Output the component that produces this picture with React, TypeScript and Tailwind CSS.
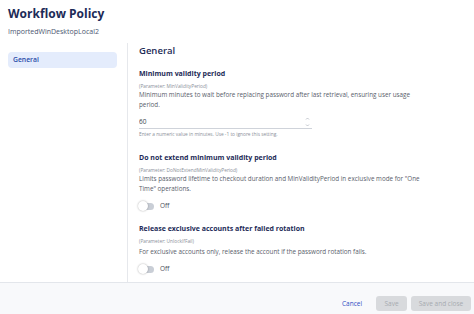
import React, { useState } from 'react';

const font = { fontFamily: '"Open Sans", "Noto Sans", sans-serif' };

function Toggle({ on, onChange }: { on: boolean; onChange: () => void }) {
  return (
    <button onClick={onChange} className="flex items-center gap-[6px] h-[10px]">
      <span className="relative w-[15px] h-[7px] rounded-full bg-[#c9ced6]">
        <span className="absolute -top-[2px] -left-[1px] w-[10px] h-[10px] rounded-full bg-white shadow-[0_0_2px_rgba(0,0,0,0.35)]" />
      </span>
      <span className="text-[6.5px] text-[#4a4f5a]">{on ? 'On' : 'Off'}</span>
    </button>
  );
}

export default function App() {
  const [minValidity, setMinValidity] = useState('60');
  const [noExtend, setNoExtend] = useState(false);
  const [unlock, setUnlock] = useState(false);

  return (
    <div style={font} className="w-[474px] h-[314px] bg-white flex flex-col overflow-hidden">
      <div className="px-[8px] pt-[4px]">
        <h1 className="text-[12px] font-bold text-[#1d2b57] leading-[20px]">Workflow Policy</h1>
        <p className="text-[7px] text-[#4a5670] leading-[10px] mt-[3px]">ImportedWinDesktopLocal2</p>
      </div>

      <div className="flex flex-1 min-h-0 mt-[6px]">
        <div className="w-[127px] pl-[8px] pr-[10px] pt-[9px]">
          <div className="h-[16px] rounded-[4px] bg-[#e4ecfc] flex items-center px-[5px] text-[6.8px] font-semibold text-[#2a4aa8]">
            General
          </div>
        </div>
        <div className="w-px bg-[#e6e8ec]" />
        <div className="flex-1 pl-[11px] pr-[10px] pt-[1px]">
          <h2 className="text-[9.5px] font-semibold text-[#1d2b57] leading-[14px]">General</h2>

          <div className="mt-[11px]">
            <h3 className="text-[7px] font-bold text-[#1d2b57] leading-[10px]">Minimum validity period</h3>
            <p className="text-[4.8px] text-[#8a8f99] leading-[8px] mt-[3px]">(Parameter: MinValidityPeriod)</p>
            <p className="text-[6.3px] text-[#5a606b] leading-[10px] w-[282px]">
              Minimum minutes to wait before replacing password after last retrieval, ensuring user usage period.
            </p>
            <div className="mt-[5px] w-[173px] h-[14px] border-b border-[#cfd3da] flex items-center justify-between">
              <input
                value={minValidity}
                onChange={(e) => setMinValidity(e.target.value)}
                className="w-[150px] text-[6.5px] text-[#3a3f4a] outline-none bg-transparent"
              />
              <svg width="5" height="12" viewBox="0 0 5 12" className="mr-[2px]" fill="none" stroke="#b3b8c0" strokeWidth="0.8">
                <path d="M1 3.5 L2.5 2 L4 3.5" />
                <path d="M1 8.5 L2.5 10 L4 8.5" />
              </svg>
            </div>
            <p className="text-[4.8px] text-[#8a8f99] leading-[8px] mt-[1px]">
              Enter a numeric value in minutes. Use -1 to ignore this setting.
            </p>
          </div>

          <div className="mt-[15px]">
            <h3 className="text-[7px] font-bold text-[#1d2b57] leading-[10px]">Do not extend minimum validity period</h3>
            <p className="text-[4.8px] text-[#8a8f99] leading-[8px] mt-[3px]">(Parameter: DoNotExtendMinValidityPeriod)</p>
            <p className="text-[6.3px] text-[#5a606b] leading-[10px] w-[282px]">
              Limits password lifetime to checkout duration and MinValidityPeriod in exclusive mode for "One Time" operations.
            </p>
            <div className="mt-[7px]">
              <Toggle on={noExtend} onChange={() => setNoExtend(!noExtend)} />
            </div>
          </div>

          <div className="mt-[13px]">
            <h3 className="text-[7px] font-bold text-[#1d2b57] leading-[10px]">Release exclusive accounts after failed rotation</h3>
            <p className="text-[4.8px] text-[#8a8f99] leading-[8px] mt-[3px]">(Parameter: UnlockIfFail)</p>
            <p className="text-[6.3px] text-[#5a606b] leading-[10px] w-[290px] mt-[2px]">
              For exclusive accounts only, release the account if the password rotation fails.
            </p>
            <div className="mt-[7px]">
              <Toggle on={unlock} onChange={() => setUnlock(!unlock)} />
            </div>
          </div>
        </div>
      </div>

      <div className="h-[32px] shrink-0 border-t border-[#e3e6eb] bg-[#f8f9fb] flex items-start justify-end pt-[13px] pr-[3px]">
        <button className="text-[6.5px] text-[#2f4fc4] h-[15px] w-[32px] mr-[8px]">Cancel</button>
        <button className="h-[15px] w-[31px] rounded-[3px] bg-[#d8dadd] text-[6.5px] text-[#a7aab0] mr-[4px]">Save</button>
        <button className="h-[15px] w-[60px] rounded-[3px] bg-[#d8dadd] text-[6.5px] text-[#a7aab0]">Save and close</button>
      </div>
    </div>
  );
}
